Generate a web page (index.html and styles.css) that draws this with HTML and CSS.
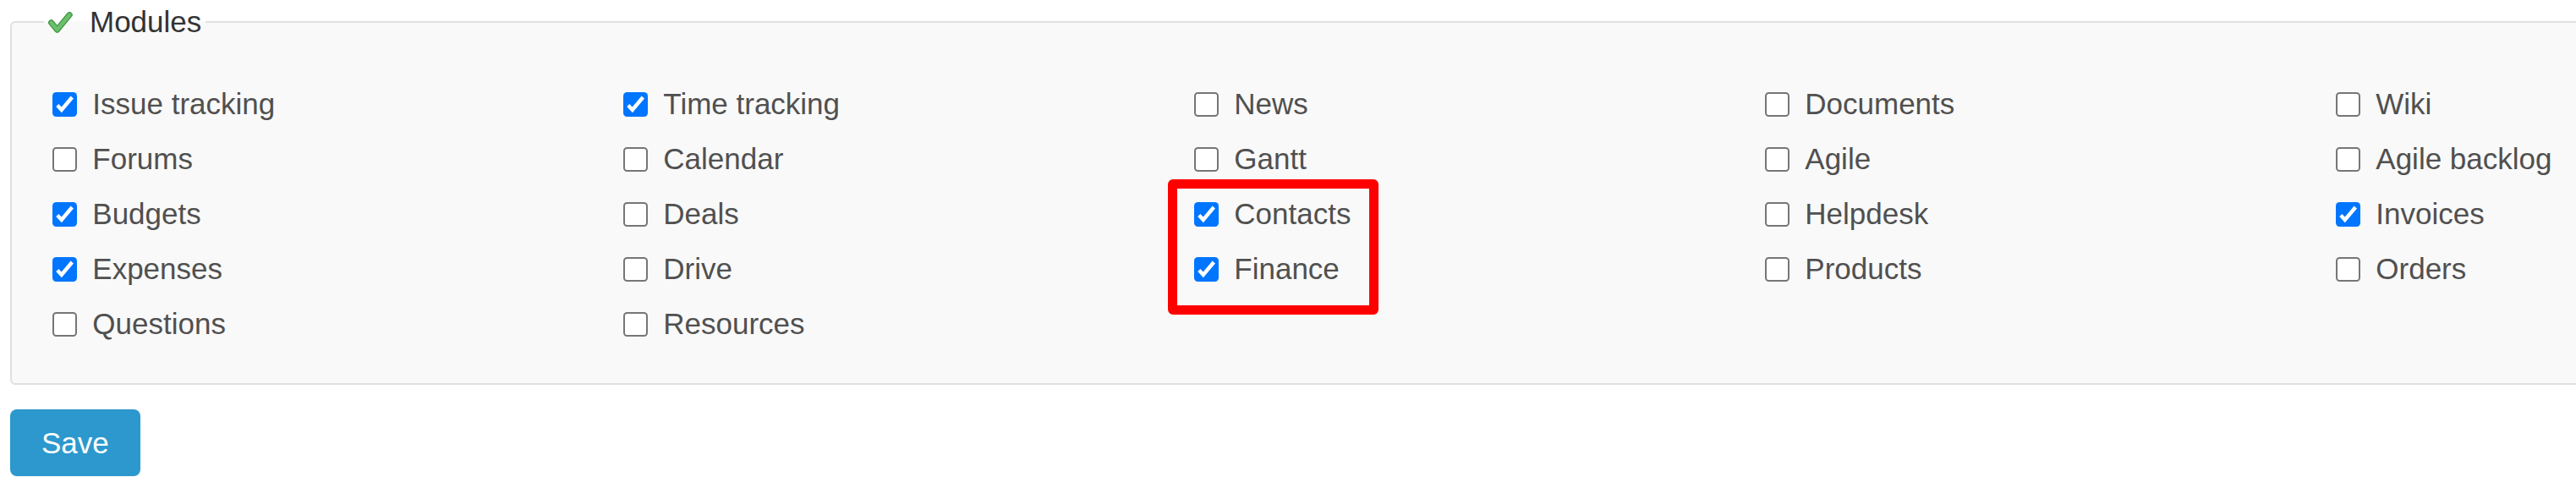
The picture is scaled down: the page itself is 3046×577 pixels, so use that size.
FILE: index.html
```html
<!DOCTYPE html>
<html lang="en">
<head>
<meta charset="utf-8">
<title>Modules</title>
<link rel="stylesheet" href="styles.css">
</head>
<body>
<form class="page">
  <fieldset class="box">
    <legend class="box-title"><svg class="icon-checked" width="29" height="25" viewBox="0 0 29 25" aria-hidden="true"><polyline points="3.6,12.8 10.6,21.2 25.2,3.6" fill="none" stroke="#3f9a43" stroke-width="7" stroke-linecap="round" stroke-linejoin="round"/><polyline points="3.6,12.8 10.6,21.2 25.2,3.6" fill="none" stroke="#6cc06d" stroke-width="4.4" stroke-linecap="round" stroke-linejoin="round"/></svg>Modules</legend>
    <div class="modules">
      <label class="module"><input type="checkbox" checked><span>Issue tracking</span></label>
      <label class="module"><input type="checkbox" checked><span>Time tracking</span></label>
      <label class="module"><input type="checkbox"><span>News</span></label>
      <label class="module"><input type="checkbox"><span>Documents</span></label>
      <label class="module"><input type="checkbox"><span>Wiki</span></label>
      <label class="module"><input type="checkbox"><span>Forums</span></label>
      <label class="module"><input type="checkbox"><span>Calendar</span></label>
      <label class="module"><input type="checkbox"><span>Gantt</span></label>
      <label class="module"><input type="checkbox"><span>Agile</span></label>
      <label class="module"><input type="checkbox"><span>Agile backlog</span></label>
      <label class="module"><input type="checkbox" checked><span>Budgets</span></label>
      <label class="module"><input type="checkbox"><span>Deals</span></label>
      <label class="module"><input type="checkbox" checked><span>Contacts</span></label>
      <label class="module"><input type="checkbox"><span>Helpdesk</span></label>
      <label class="module"><input type="checkbox" checked><span>Invoices</span></label>
      <label class="module"><input type="checkbox" checked><span>Expenses</span></label>
      <label class="module"><input type="checkbox"><span>Drive</span></label>
      <label class="module"><input type="checkbox" checked><span>Finance</span></label>
      <label class="module"><input type="checkbox"><span>Products</span></label>
      <label class="module"><input type="checkbox"><span>Orders</span></label>
      <label class="module"><input type="checkbox"><span>Questions</span></label>
      <label class="module"><input type="checkbox"><span>Resources</span></label>
    </div>
  </fieldset>
  <button type="button" class="btn-save">Save</button>
  <div class="highlight" aria-hidden="true"></div>
</form>
</body>
</html>
```

FILE: styles.css
```css
html {
  overflow: hidden;
  background: #ffffff;
}

body {
  margin: 0;
  font-family: "Liberation Sans", Arial, sans-serif;
  font-size: 35px;
  color: #505050;
}

.page {
  position: relative;
  display: flex;
  flex-direction: column;
  align-items: flex-start;
  padding-left: 12px;
}

.box {
  margin: 5px 0 0 0;
  padding: 44px 0 37px 38px;
  border: 2px solid #e0e0e0;
  border-radius: 6px;
  background: #f9f9f9;
  width: max-content;
}

.box-title {
  padding: 0 5px 0 5px;
  margin: 0;
  height: 42px;
  line-height: 42px;
  color: #333333;
  white-space: nowrap;
}

.icon-checked {
  vertical-align: -1px;
  margin-right: 20px;
}

.modules {
  display: grid;
  grid-template-columns: repeat(5, 675px);
}

.module {
  display: flex;
  align-items: center;
  height: 65px;
  padding-left: 10px;
  white-space: nowrap;
}

.module input {
  appearance: none;
  -webkit-appearance: none;
  position: relative;
  flex: none;
  box-sizing: border-box;
  width: 29px;
  height: 29px;
  margin: 0 0 0 0.3px;
  border: 2.25px solid #767676;
  border-radius: 4.5px;
  background: #ffffff;
}

.module input:checked {
  border: none;
  background: #0075ff;
}

.module input:checked::after {
  content: "";
  position: absolute;
  inset: 0;
  background: #ffffff;
  clip-path: polygon(7.1px 14px, 10.4px 17.6px, 21.3px 4.6px, 24.7px 7.4px, 10.6px 24.3px, 3.9px 17px);
}

.module span {
  margin-left: 18px;
  padding-bottom: 2px;
}

.btn-save {
  margin-top: 29px;
  height: 79px;
  padding: 0 37px;
  border: none;
  border-radius: 8px;
  background: #2c98cd;
  color: #ffffff;
  font-family: "Liberation Sans", Arial, sans-serif;
  font-size: 35px;
  line-height: 79px;
}

.highlight {
  position: absolute;
  left: 1381px;
  top: 212px;
  width: 249px;
  height: 160px;
  box-sizing: border-box;
  border: 11px solid #ff0000;
  border-radius: 6px;
}
```
